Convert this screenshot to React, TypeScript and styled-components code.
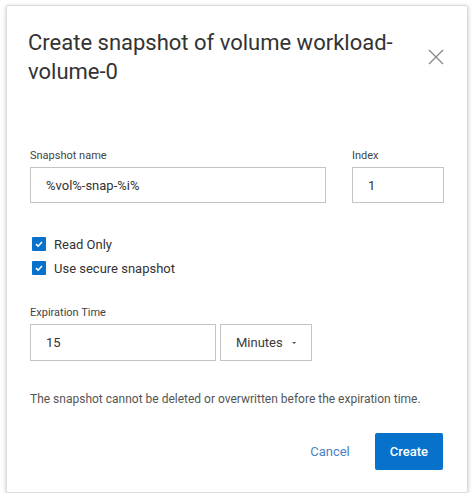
import React from 'react';
import styled, { createGlobalStyle } from 'styled-components';

const GlobalStyle = createGlobalStyle`
  body {
    margin: 0;
    background: #fff;
    font-family: Roboto, "Liberation Sans", Arial, sans-serif;
    color: #333;
  }
`;

const Dialog = styled.div`
  box-sizing: border-box;
  width: 462px;
  height: 488px;
  margin: 5px 0 0 6px;
  border: 1px solid #dcdcdc;
  border-radius: 2px;
  box-shadow: 0 1px 4px rgba(0, 0, 0, 0.22);
  background: #fff;
  display: flex;
  flex-direction: column;
`;

const Header = styled.div`
  display: flex;
  align-items: center;
  justify-content: space-between;
  padding: 22px 19px 0 21px;
`;

const Title = styled.h1`
  margin: 0;
  width: 380px;
  font-size: 22px;
  line-height: 29px;
  font-weight: 400;
  color: #333;
`;

const CloseButton = styled.button`
  width: 24px;
  height: 24px;
  padding: 0;
  border: none;
  background: none;
  display: flex;
  align-items: center;
  justify-content: center;
  cursor: pointer;
`;

const Body = styled.div`
  padding: 63px 23px 0;
  display: flex;
  flex-direction: column;
`;

const FieldRow = styled.div<{ $gap: number }>`
  display: flex;
  gap: ${p => p.$gap}px;
`;

const Field = styled.div<{ $width?: number }>`
  display: flex;
  flex-direction: column;
  ${p => (p.$width ? `width: ${p.$width}px;` : 'flex: 1;')}
`;

const Label = styled.label`
  font-size: 11px;
  line-height: 14px;
  color: #444;
  margin-bottom: 4px;
`;

const TextInput = styled.input<{ $height?: number }>`
  box-sizing: border-box;
  height: ${p => p.$height ?? 36}px;
  width: 100%;
  border: 1px solid #c4c4c4;
  border-radius: 0;
  padding: 0 15px;
  font-family: inherit;
  font-size: 13px;
  color: #333;
  outline: none;
`;

const SelectBox = styled.div`
  box-sizing: border-box;
  width: 92px;
  height: 37px;
  margin-top: 18px;
  border: 1px solid #c4c4c4;
  padding: 0 15px;
  display: flex;
  align-items: center;
  gap: 9px;
  font-size: 13px;
  color: #3a3a3a;
`;

const Checks = styled.div`
  margin-top: 29px;
  display: flex;
  flex-direction: column;
`;

const CheckRow = styled.label`
  height: 24px;
  display: flex;
  align-items: center;
  gap: 8px;
  padding-left: 2px;
  font-size: 13px;
  color: #333;
`;

const CheckBox = styled.span`
  width: 14px;
  height: 14px;
  border-radius: 1px;
  background: #0672cb;
  display: flex;
  align-items: center;
  justify-content: center;
`;

const Section = styled.div`
  margin-top: 26px;
`;

const Note = styled.p`
  margin: 29px 0 0;
  font-size: 12px;
  line-height: 18px;
  color: #555;
`;

const Footer = styled.div`
  margin-top: 25px;
  padding-right: 24px;
  display: flex;
  justify-content: flex-end;
  align-items: center;
  gap: 13px;
`;

const Button = styled.button<{ $primary?: boolean }>`
  height: 37px;
  padding: 0 ${p => (p.$primary ? 15 : 12)}px;
  border: none;
  border-radius: 2px;
  font-family: inherit;
  font-size: 13px;
  font-weight: ${p => (p.$primary ? 500 : 400)};
  background: ${p => (p.$primary ? '#0672cb' : 'transparent')};
  color: ${p => (p.$primary ? '#fff' : '#4a82c4')};
  cursor: pointer;
`;

const Check = () => (
  <svg width="10" height="10" viewBox="0 0 10 10">
    <path d="M2 5.2 L4.1 7.2 L8 3" fill="none" stroke="#fff" strokeWidth="1.6" />
  </svg>
);

export default function App() {
  return (
    <>
      <GlobalStyle />
      <Dialog>
        <Header>
          <Title>Create snapshot of volume workload-volume-0</Title>
          <CloseButton aria-label="Close">
            <svg width="16" height="16" viewBox="0 0 16 16">
              <path d="M1 1 L15 15 M15 1 L1 15" stroke="#8a8a8a" strokeWidth="1.4" />
            </svg>
          </CloseButton>
        </Header>
        <Body>
          <FieldRow $gap={26}>
            <Field>
              <Label>Snapshot name</Label>
              <TextInput defaultValue="%vol%-snap-%i%" />
            </Field>
            <Field $width={92}>
              <Label>Index</Label>
              <TextInput defaultValue="1" />
            </Field>
          </FieldRow>
          <Checks>
            <CheckRow>
              <CheckBox><Check /></CheckBox>
              Read Only
            </CheckRow>
            <CheckRow>
              <CheckBox><Check /></CheckBox>
              Use secure snapshot
            </CheckRow>
          </Checks>
          <Section>
            <FieldRow $gap={4}>
              <Field $width={186}>
                <Label>Expiration Time</Label>
                <TextInput $height={37} defaultValue="15" />
              </Field>
              <SelectBox>
                Minutes
                <svg width="8" height="4" viewBox="0 0 8 4">
                  <path d="M0 0 L8 0 L4 4 Z" fill="#555" />
                </svg>
              </SelectBox>
            </FieldRow>
          </Section>
          <Note>The snapshot cannot be deleted or overwritten before the expiration time.</Note>
        </Body>
        <Footer>
          <Button>Cancel</Button>
          <Button $primary>Create</Button>
        </Footer>
      </Dialog>
    </>
  );
}
